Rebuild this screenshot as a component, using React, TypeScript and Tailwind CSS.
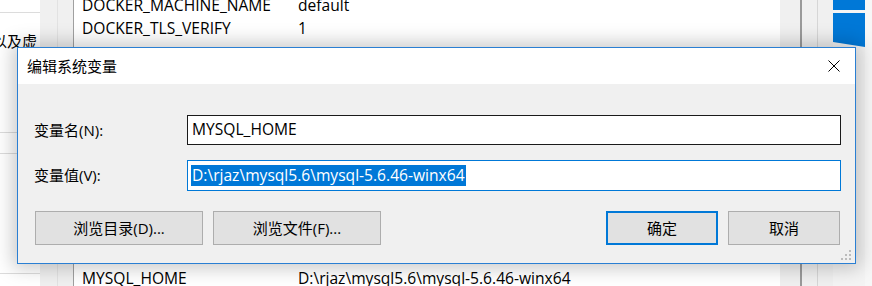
import React from "react";

const FONT = '"Open Sans", "Noto Sans CJK SC", sans-serif';

function Row({ name, value }: { name: string; value: string }) {
  return (
    <div className="flex h-[23px] items-center pl-[8px] text-[15.6px] text-black whitespace-nowrap">
      <div className="w-[216px] shrink-0">{name}</div>
      <div>{value}</div>
    </div>
  );
}

export default function App() {
  return (
    <div
      className="relative w-[872px] h-[286px] overflow-hidden bg-white"
      style={{ fontFamily: FONT }}
    >
      {/* background window */}
      <div className="flex h-full">
        {/* left panel */}
        <div className="w-[40px] shrink-0 overflow-hidden flex flex-col bg-white">
          <div className="h-[13px] shrink-0 border-b border-[#dcdcdc]" />
          <div className="h-[120px] shrink-0 border-b border-[#dcdcdc] overflow-hidden">
            <div className="mt-[19px] -ml-[8px] w-[48px] overflow-hidden whitespace-nowrap text-[15px] leading-[18px] text-black">
              以及虚
            </div>
          </div>
          <div className="h-[21px] shrink-0 border-b border-[#dcdcdc]" />
          <div className="h-[120px] shrink-0 border-b border-[#dcdcdc]" />
        </div>
        {/* gray strip */}
        <div className="w-[34px] shrink-0 flex bg-[#f0f0f0] border-r border-[#a0a0a0]">
          <div className="w-[18px] border-r border-[#e2e2e2]" />
        </div>
        {/* list view */}
        <div className="w-[706px] shrink-0 flex flex-col bg-white">
          <div className="-mt-[6px]">
            <Row name="DOCKER_MACHINE_NAME" value="default" />
            <Row name="DOCKER_TLS_VERIFY" value="1" />
          </div>
          <div className="mt-auto -mb-[4px]">
            <Row name="MYSQL_HOME" value="D:\rjaz\mysql5.6\mysql-5.6.46-winx64" />
          </div>
        </div>
        {/* scrollbar / frame region */}
        <div className="w-[53px] shrink-0 flex bg-[#f0f0f0]">
          <div className="w-[22px] border-r-2 border-[#9a9a9a]" />
          <div className="w-[16px] border-r border-[#d6d6d6]" />
        </div>
        {/* desktop blue */}
        <div className="w-[32px] shrink-0 bg-[#f4f4f4]">
          <svg width="32" height="50" viewBox="0 0 32 50">
            <rect x="0" y="0" width="32" height="10" fill="#0078d7" />
            <polygon points="0,13 32,13 32,47 0,42" fill="#0078d7" />
          </svg>
        </div>
        <div className="flex-1 bg-[#f7f7f7]" />
      </div>

      {/* dialog */}
      <div className="absolute left-[17px] top-[47px] w-[839px] h-[217px] border border-[#2a7fd3] bg-[#f0f0f0] flex flex-col shadow-[0_0_18px_4px_rgba(0,0,0,0.22)]">
        {/* title bar */}
        <div className="h-[36px] shrink-0 bg-white flex items-center pl-[9px] pr-[15px]">
          <div className="text-[15px] text-black leading-none">编辑系统变量</div>
          <div className="ml-auto w-[12px] h-[12px]">
            <svg width="12" height="12" viewBox="0 0 12 12">
              <path d="M0.5 0.5 L11.5 11.5 M11.5 0.5 L0.5 11.5" stroke="#000" strokeWidth="1" fill="none" />
            </svg>
          </div>
        </div>
        {/* body */}
        <div className="flex-1 flex flex-col pl-[16px] pr-[14px] pt-[31px] text-[15px] text-black">
          <div className="flex items-center h-[30px]">
            <div className="w-[153px] shrink-0">变量名(N):</div>
            <div className="flex-1 h-[30px] border border-[#1a1a1a] bg-white flex items-center pl-[4px] whitespace-nowrap text-[15.6px]">
              MYSQL_HOME
            </div>
          </div>
          <div className="flex items-center h-[31px] mt-[15px]">
            <div className="w-[153px] shrink-0">变量值(V):</div>
            <div className="flex-1 h-[31px] border border-[#0078d7] bg-white flex items-center pl-[3px] whitespace-nowrap text-[15.6px]">
              <span className="bg-[#0078d7] text-white h-[21px] flex items-center pl-px pr-px">
                D:\rjaz\mysql5.6\mysql-5.6.46-winx64
              </span>
            </div>
          </div>
          <div className="flex mt-[20px] pl-px">
            <div className="w-[168px] h-[34px] border border-[#adadad] bg-[#e1e1e1] flex items-center justify-center">
              浏览目录(D)...
            </div>
            <div className="w-[168px] h-[34px] ml-[10px] border border-[#adadad] bg-[#e1e1e1] flex items-center justify-center">
              浏览文件(F)...
            </div>
            <div className="ml-auto w-[112px] h-[34px] border-2 border-[#0078d7] bg-[#e1e1e1] flex items-center justify-center">
              确定
            </div>
            <div className="w-[112px] h-[34px] ml-[10px] mr-px border border-[#adadad] bg-[#e1e1e1] flex items-center justify-center">
              取消
            </div>
          </div>
        </div>
        {/* resize grip */}
        <div className="absolute right-[4px] bottom-[3px] w-[10px] h-[10px]">
          <svg width="10" height="10" viewBox="0 0 10 10">
            <rect x="8" y="0" width="2" height="2" fill="#bcbcbc" />
            <rect x="4" y="4" width="2" height="2" fill="#bcbcbc" />
            <rect x="8" y="4" width="2" height="2" fill="#bcbcbc" />
            <rect x="0" y="8" width="2" height="2" fill="#bcbcbc" />
            <rect x="4" y="8" width="2" height="2" fill="#bcbcbc" />
            <rect x="8" y="8" width="2" height="2" fill="#bcbcbc" />
          </svg>
        </div>
      </div>
    </div>
  );
}
